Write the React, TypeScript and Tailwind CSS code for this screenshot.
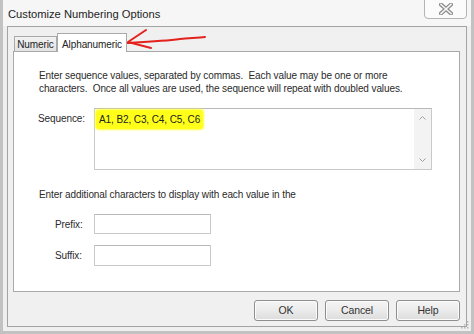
import React from "react";

function CloseGlyph() {
  return (
    <svg width="14" height="12" viewBox="0 0 14 12">
      <path d="M2 1.5 L12 10.5 M12 1.5 L2 10.5" stroke="#8c8c8c" strokeWidth="4" strokeLinecap="square" />
      <path d="M2 1.5 L12 10.5 M12 1.5 L2 10.5" stroke="#f4f4f4" strokeWidth="1.6" strokeLinecap="square" />
    </svg>
  );
}

function DialogButton({ label }: { label: string }) {
  return (
    <button className="w-[64px] h-[21px] rounded-[3px] border border-[#8e8e8e] bg-gradient-to-b from-[#f4f4f4] via-[#ebebeb] to-[#dcdcdc] text-[10.5px] tracking-[-0.1px] text-[#333] shadow-[inset_0_0_0_1px_#fbfbfb]">
      {label}
    </button>
  );
}

export default function App() {
  const font = { fontFamily: '"Liberation Sans", Arial, sans-serif' };

  return (
    <div
      className="relative w-[474px] h-[334px] flex flex-col bg-[#efefef] border-x-[3px] border-b-[3px] border-[#c2c2c2] overflow-hidden"
      style={font}
    >
      {/* Title bar */}
      <div className="relative h-[26px] flex items-center pl-[5px] bg-[#f6f6f6]">
        <span className="text-[11.2px] text-[#1e1e1e] mt-[3px]">Customize Numbering Options</span>
        <div className="absolute right-[4px] -top-px w-[43px] h-[20px] border border-[#b4b4b4] rounded-b-[4px] bg-[#fbfbfb] flex items-center justify-center">
          <CloseGlyph />
        </div>
      </div>

      {/* Client area */}
      <div className="flex-1 mx-[4px] mb-[4px] border border-[#a3a3a3] bg-[#f0f0f0] flex flex-col pl-[5px] pr-[6px] text-[10px] tracking-[-0.1px]">
        {/* Tabs */}
        <div className="mt-[6px] h-[18px] flex items-end pl-px relative z-10">
          <div className="h-[15px] w-[43px] border border-[#a9a9a9] border-b-0 bg-gradient-to-b from-[#f2f2f2] to-[#e3e3e3] text-[#222] flex items-center justify-center">
            Numeric
          </div>
          <div className="h-[19px] -mb-px w-[70px] border border-[#a9a9a9] border-b-0 bg-white text-[#222] flex items-start justify-center pt-[3px]">
            Alphanumeric
          </div>
        </div>

        {/* Panel */}
        <div className="h-[241px] border border-[#a9a9a9] bg-white pl-[25px] pt-[17px] text-[#2a2a2a]">
          <p className="leading-[13px]">
            Enter sequence values, separated by commas.&nbsp; Each value may be one or more
            <br />
            characters.&nbsp; Once all values are used, the sequence will repeat with doubled values.
          </p>

          <div className="mt-[13px] flex">
            <div className="w-[56px] -ml-px pt-[4px] leading-[13px]">Sequence:</div>
            <div className="w-[338px] h-[62px] border border-[#c9c9c9] border-t-[#b8b8b8] flex">
              <div className="flex-1 pl-px pt-px">
                <span className="inline-block bg-[#ffff1a] rounded-[3px] px-[3px] py-[3px] leading-[13px] text-[#222] shadow-[0_0_2px_1px_#ffff40]">
                  A1, B2, C3, C4, C5, C6
                </span>
              </div>
              <div className="w-[17px] bg-[#f3f3f3] flex flex-col items-center justify-between py-[7px]">
                <svg width="7" height="4" viewBox="0 0 7 4">
                  <path d="M0.5 3.5 L3.5 0.5 L6.5 3.5" fill="none" stroke="#a0a0a0" strokeWidth="1" />
                </svg>
                <svg width="7" height="4" viewBox="0 0 7 4">
                  <path d="M0.5 0.5 L3.5 3.5 L6.5 0.5" fill="none" stroke="#a0a0a0" strokeWidth="1" />
                </svg>
              </div>
            </div>
          </div>

          <p className="mt-[18px] leading-[13px]">Enter additional characters to display with each value in the</p>

          <div className="mt-[13px] flex items-center">
            <div className="w-[56px] pl-[17px] -ml-px">Prefix:</div>
            <div className="w-[117px] h-[20px] border border-[#c9c9c9] border-t-[#b8b8b8] bg-white" />
          </div>
          <div className="mt-[11px] flex items-center">
            <div className="w-[56px] pl-[17px] -ml-px">Suffix:</div>
            <div className="w-[117px] h-[21px] border border-[#c9c9c9] border-t-[#b8b8b8] bg-white" />
          </div>
        </div>

        {/* Buttons */}
        <div className="mt-[8px] flex justify-end gap-[7px]">
          <DialogButton label="OK" />
          <DialogButton label="Cancel" />
          <DialogButton label="Help" />
        </div>
      </div>

      {/* Size grip */}
      <svg className="absolute right-[2px] bottom-[2px]" width="8" height="8" viewBox="0 0 8 8">
        <rect x="6" y="0" width="1.5" height="1.5" fill="#b8b8b8" />
        <rect x="3" y="3" width="1.5" height="1.5" fill="#b8b8b8" />
        <rect x="6" y="3" width="1.5" height="1.5" fill="#b8b8b8" />
        <rect x="0" y="6" width="1.5" height="1.5" fill="#b8b8b8" />
        <rect x="3" y="6" width="1.5" height="1.5" fill="#b8b8b8" />
        <rect x="6" y="6" width="1.5" height="1.5" fill="#b8b8b8" />
      </svg>

      {/* Red annotation arrow */}
      <svg className="absolute left-[-3px] top-0 pointer-events-none" width="230" height="60" viewBox="0 0 230 60">
        <path
          d="M127 43 C145 42 165 41 180 39 C190 38 198 38 205 37"
          fill="none"
          stroke="#e4221c"
          strokeWidth="2"
          strokeLinecap="round"
        />
        <path d="M146 30 L128 42 L151 48" fill="none" stroke="#e4221c" strokeWidth="2" strokeLinecap="round" strokeLinejoin="round" />
      </svg>
    </div>
  );
}
